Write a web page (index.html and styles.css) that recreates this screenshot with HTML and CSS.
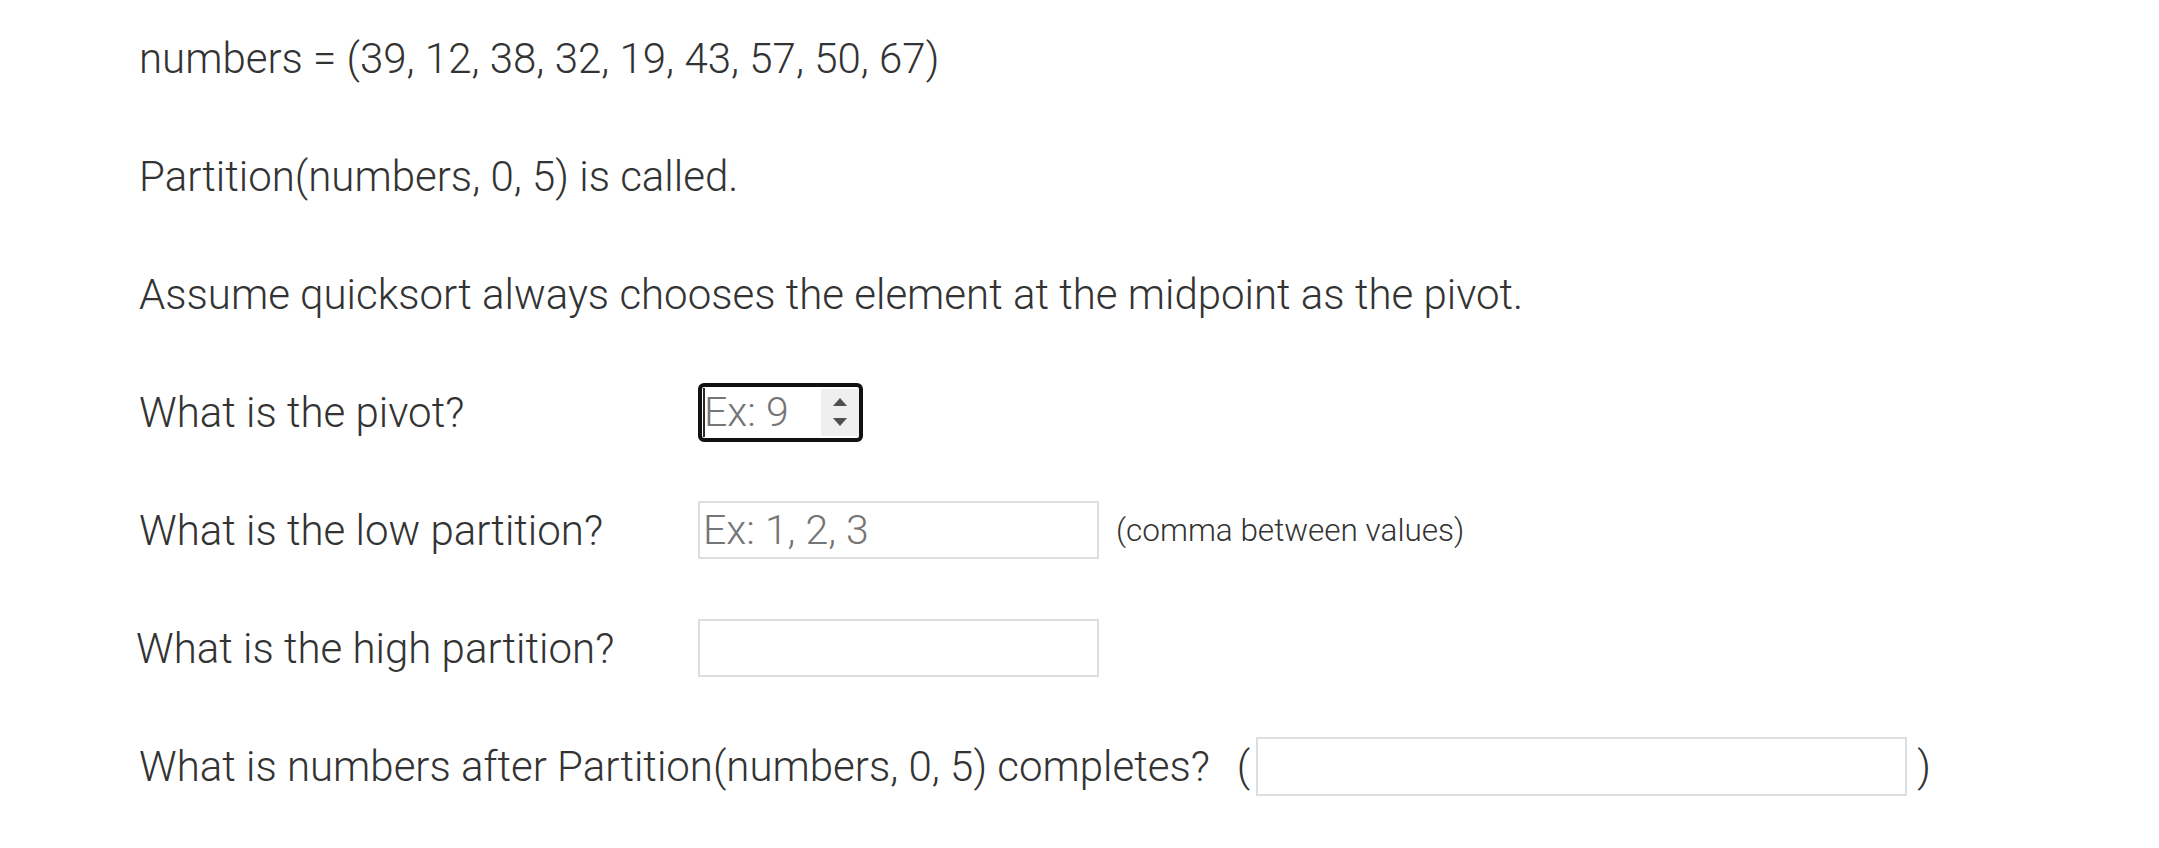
FILE: index.html
```html
<!DOCTYPE html>
<html lang="en">
<head>
<meta charset="utf-8">
<title>Partition question</title>
<link rel="stylesheet" href="styles.css">
</head>
<body>
<main class="page">
  <p class="row">numbers = (39, 12, 38, 32, 19, 43, 57, 50, 67)</p>
  <p class="row">Partition(numbers, 0, 5) is called.</p>
  <p class="row">Assume quicksort always chooses the element at the midpoint as the pivot.</p>
  <div class="row">
    <label class="q-label">What is the pivot?</label>
    <div class="num-box">
      <input class="num-in" type="text" placeholder="Ex: 9">
      <span class="caret"></span>
      <div class="spin"><span class="arrow up"></span><span class="arrow down"></span></div>
    </div>
  </div>
  <div class="row">
    <label class="q-label">What is the low partition?</label>
    <input class="text-in" type="text" placeholder="Ex: 1, 2, 3">
    <span class="hint">(comma between values)</span>
  </div>
  <div class="row">
    <label class="q-label shifted">What is the high partition?</label>
    <input class="text-in" type="text">
  </div>
  <div class="row">
    <span class="final-label">What is numbers after Partition(numbers, 0, 5) completes?</span>
    <span class="paren open">(</span>
    <input class="wide-in" type="text">
    <span class="paren close">)</span>
  </div>
</main>
</body>
</html>
```
FILE: styles.css
```css
html, body {
  margin: 0;
  background: #ffffff;
}
body {
  font-family: Roboto, "Liberation Sans", sans-serif;
  font-weight: 300;
  font-size: 42px;
  color: #333333;
}
.page {
  display: flex;
  flex-direction: column;
  gap: 59px;
  padding: 28.5px 0 0 139px;
}
.row {
  margin: 0;
  height: 59px;
  line-height: 59px;
  display: flex;
  align-items: center;
  white-space: nowrap;
}
.q-label {
  flex: none;
  width: 559px;
}
.q-label.shifted {
  margin-left: -3px;
  width: 562px;
}
input {
  font-family: inherit;
  font-weight: 300;
  font-size: 41px;
  color: #333333;
  outline: none;
  background: #ffffff;
}
input::placeholder {
  color: #757575;
  opacity: 1;
}
.text-in {
  box-sizing: border-box;
  width: 401px;
  height: 58px;
  border: 2px solid #dadfe3;
  padding: 0 3px;
  margin: 0;
}
.hint {
  margin-left: 17px;
  font-size: 31.5px;
}
.num-box {
  position: relative;
  display: flex;
  box-sizing: border-box;
  width: 165px;
  height: 59px;
  border: 4px solid #111111;
  border-radius: 6px;
  background: #ffffff;
  overflow: hidden;
}
.num-in {
  flex: 1;
  min-width: 0;
  height: 100%;
  border: 0;
  padding: 0 0 0 2px;
  margin: 0;
  background: transparent;
}
.caret {
  position: absolute;
  left: 1px;
  top: 1px;
  bottom: 1px;
  width: 2px;
  background: #2a2a2a;
}
.spin {
  flex: none;
  width: 38px;
  margin: 2px 0;
  background: #efefef;
  display: flex;
  flex-direction: column;
  align-items: center;
  justify-content: center;
  gap: 12px;
}
.arrow {
  width: 0;
  height: 0;
  border-left: 7px solid transparent;
  border-right: 7px solid transparent;
}
.arrow.up {
  border-bottom: 8px solid #505050;
}
.arrow.down {
  border-top: 8px solid #505050;
}
.final-label {
  flex: none;
}
.paren.open {
  margin-left: 27px;
  margin-right: 6px;
}
.paren.close {
  margin-left: 10px;
}
.wide-in {
  box-sizing: border-box;
  width: 651px;
  height: 59px;
  border: 2px solid #dadfe3;
  padding: 0 3px;
  margin: 0;
}
```
